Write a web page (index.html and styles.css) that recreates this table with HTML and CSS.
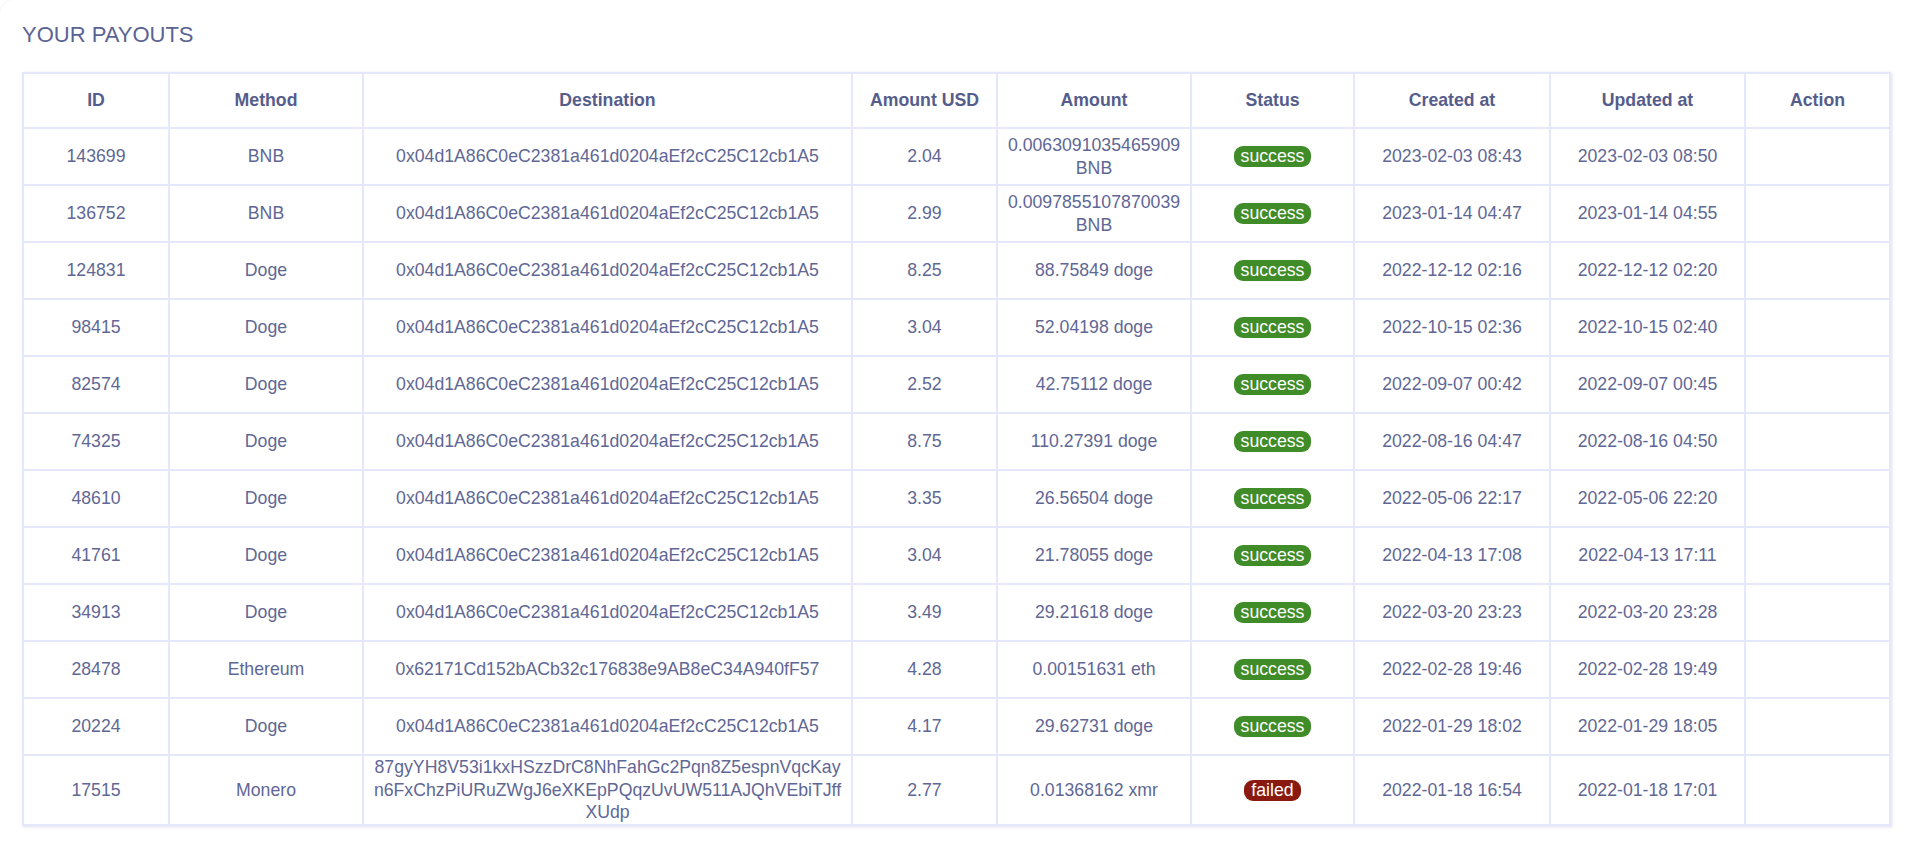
FILE: index.html
```html
<!DOCTYPE html>
<html lang="en">
<head>
<meta charset="utf-8">
<title>Your payouts</title>
<link rel="stylesheet" href="styles.css">
</head>
<body>
<div class="card">
  <h2 class="title">YOUR PAYOUTS</h2>
  <table class="payouts">
    <colgroup>
      <col class="c-id"><col class="c-method"><col class="c-dest"><col class="c-usd"><col class="c-amount"><col class="c-status"><col class="c-created"><col class="c-updated"><col class="c-action">
    </colgroup>
    <thead>
      <tr><th>ID</th><th>Method</th><th>Destination</th><th>Amount USD</th><th>Amount</th><th>Status</th><th>Created at</th><th>Updated at</th><th>Action</th></tr>
    </thead>
    <tbody>
      <tr><td>143699</td><td>BNB</td><td class="dest">0x04d1A86C0eC2381a461d0204aEf2cC25C12cb1A5</td><td>2.04</td><td>0.0063091035465909 BNB</td><td><span class="badge ok">success</span></td><td>2023-02-03 08:43</td><td>2023-02-03 08:50</td><td></td></tr>
      <tr><td>136752</td><td>BNB</td><td class="dest">0x04d1A86C0eC2381a461d0204aEf2cC25C12cb1A5</td><td>2.99</td><td>0.0097855107870039 BNB</td><td><span class="badge ok">success</span></td><td>2023-01-14 04:47</td><td>2023-01-14 04:55</td><td></td></tr>
      <tr><td>124831</td><td>Doge</td><td class="dest">0x04d1A86C0eC2381a461d0204aEf2cC25C12cb1A5</td><td>8.25</td><td>88.75849 doge</td><td><span class="badge ok">success</span></td><td>2022-12-12 02:16</td><td>2022-12-12 02:20</td><td></td></tr>
      <tr><td>98415</td><td>Doge</td><td class="dest">0x04d1A86C0eC2381a461d0204aEf2cC25C12cb1A5</td><td>3.04</td><td>52.04198 doge</td><td><span class="badge ok">success</span></td><td>2022-10-15 02:36</td><td>2022-10-15 02:40</td><td></td></tr>
      <tr><td>82574</td><td>Doge</td><td class="dest">0x04d1A86C0eC2381a461d0204aEf2cC25C12cb1A5</td><td>2.52</td><td>42.75112 doge</td><td><span class="badge ok">success</span></td><td>2022-09-07 00:42</td><td>2022-09-07 00:45</td><td></td></tr>
      <tr><td>74325</td><td>Doge</td><td class="dest">0x04d1A86C0eC2381a461d0204aEf2cC25C12cb1A5</td><td>8.75</td><td>110.27391 doge</td><td><span class="badge ok">success</span></td><td>2022-08-16 04:47</td><td>2022-08-16 04:50</td><td></td></tr>
      <tr><td>48610</td><td>Doge</td><td class="dest">0x04d1A86C0eC2381a461d0204aEf2cC25C12cb1A5</td><td>3.35</td><td>26.56504 doge</td><td><span class="badge ok">success</span></td><td>2022-05-06 22:17</td><td>2022-05-06 22:20</td><td></td></tr>
      <tr><td>41761</td><td>Doge</td><td class="dest">0x04d1A86C0eC2381a461d0204aEf2cC25C12cb1A5</td><td>3.04</td><td>21.78055 doge</td><td><span class="badge ok">success</span></td><td>2022-04-13 17:08</td><td>2022-04-13 17:11</td><td></td></tr>
      <tr><td>34913</td><td>Doge</td><td class="dest">0x04d1A86C0eC2381a461d0204aEf2cC25C12cb1A5</td><td>3.49</td><td>29.21618 doge</td><td><span class="badge ok">success</span></td><td>2022-03-20 23:23</td><td>2022-03-20 23:28</td><td></td></tr>
      <tr><td>28478</td><td>Ethereum</td><td class="dest">0x62171Cd152bACb32c176838e9AB8eC34A940fF57</td><td>4.28</td><td>0.00151631 eth</td><td><span class="badge ok">success</span></td><td>2022-02-28 19:46</td><td>2022-02-28 19:49</td><td></td></tr>
      <tr><td>20224</td><td>Doge</td><td class="dest">0x04d1A86C0eC2381a461d0204aEf2cC25C12cb1A5</td><td>4.17</td><td>29.62731 doge</td><td><span class="badge ok">success</span></td><td>2022-01-29 18:02</td><td>2022-01-29 18:05</td><td></td></tr>
      <tr><td>17515</td><td>Monero</td><td class="dest">87gyYH8V53i1kxHSzzDrC8NhFahGc2Pqn8Z5espnVqcKayn6FxChzPiURuZWgJ6eXKEpPQqzUvUW511AJQhVEbiTJffXUdp</td><td>2.77</td><td>0.01368162 xmr</td><td><span class="badge bad">failed</span></td><td>2022-01-18 16:54</td><td>2022-01-18 17:01</td><td></td></tr>
    </tbody>
  </table>
</div>
</body>
</html>
```

FILE: styles.css
```css
html, body {
  margin: 0;
  padding: 0;
  background: #ffffff;
  overflow-x: hidden;
}

body {
  font-family: "Liberation Sans", Arial, Helvetica, sans-serif;
  color: #5f6795;
}

.card {
  background: #ffffff;
  border-radius: 14px;
  box-shadow: 0 0 3px rgba(70, 80, 130, 0.12);
  padding: 23px 22px 40px 22px;
  margin-right: -40px;
  min-height: 900px;
  box-sizing: border-box;
}

.title {
  margin: 0;
  font-size: 22px;
  font-weight: normal;
  line-height: 24px;
  color: #5b6392;
}

.payouts {
  margin-top: 25px;
  width: 1867px;
  table-layout: fixed;
  border-collapse: collapse;
  font-size: 17.7px;
  line-height: 22.5px;
  box-shadow: 1px 1px 3px rgba(70, 80, 130, 0.18);
}

.c-id { width: 146px; }
.c-method { width: 194px; }
.c-dest { width: 489px; }
.c-usd { width: 145px; }
.c-amount { width: 194px; }
.c-status { width: 163px; }
.c-created { width: 196px; }
.c-updated { width: 195px; }
.c-action { width: 145px; }

.payouts th,
.payouts td {
  border: 2px solid #e5e8fb;
  text-align: center;
  vertical-align: middle;
  padding: 0 8px;
}

.payouts th {
  font-weight: bold;
  color: #555d8c;
}

.payouts thead tr {
  height: 55px;
}

.payouts tbody tr {
  height: 57px;
}

.payouts .dest {
  word-break: break-all;
}

.badge {
  display: inline-block;
  color: #ffffff;
  padding: 0 7px;
  line-height: 21px;
  border-radius: 9px;
}

.badge.ok {
  background: #3f8c28;
}

.badge.bad {
  background: #8a1a0f;
}
```
